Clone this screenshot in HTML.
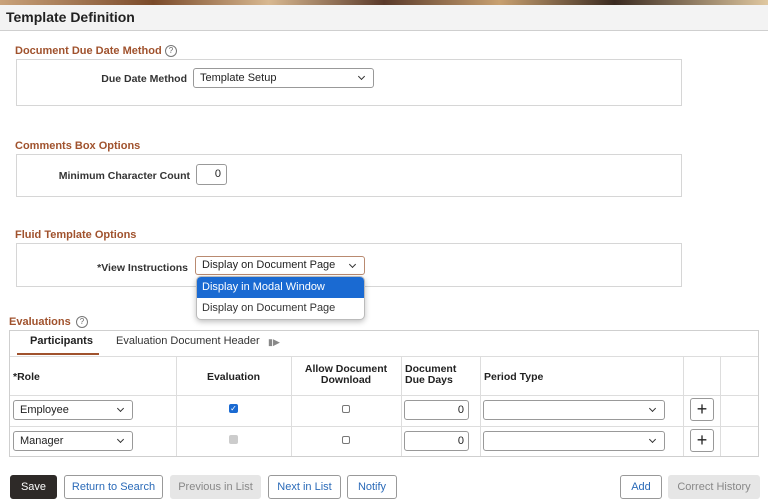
<!DOCTYPE html>
<html><head><style>
*{box-sizing:border-box;margin:0;padding:0}
body{width:768px;height:501px;background:#fff;font-family:"Liberation Sans",Arial,sans-serif;font-size:11px;color:#333;position:relative;overflow:hidden}
.a{position:absolute}
.strip{left:0;top:0;width:768px;height:5px;background:linear-gradient(90deg,#c9a27a,#7a4a2a 20%,#d8b890 35%,#5a3a2a 50%,#c8a070 65%,#3a2a20 80%,#e0c8a0)}
.bar{left:0;top:5px;width:768px;height:26px;background:#f3f3f3;border-bottom:1px solid #cfcfcf}
.title{left:6px;top:9px;font-size:14px;font-weight:bold;color:#222}
.sec{color:#a0522d;font-weight:bold;font-size:11px}
.box{border:1px solid #d6d6d6}
.lbl{font-weight:bold;color:#333;text-align:right;font-size:10.5px}
.inp{border:1px solid #999;border-radius:3px;background:#fff;padding:0 6px;line-height:18px;font-size:11px;color:#222}
.sel{border:1px solid #999;border-radius:3px;background:#fff;padding:0 6px;line-height:18px;font-size:11px;color:#222}
.sel:after{content:"";position:absolute;right:9px;top:5px;width:4px;height:4px;border-right:1.5px solid #333;border-bottom:1.5px solid #333;transform:rotate(45deg)}
.q{width:12px;height:12px;border:1px solid #777;border-radius:50%;font-size:8px;text-align:center;line-height:10px;color:#666}
.btn{border:1px solid #999;border-radius:3px;background:#fff;color:#2a6ab8;text-align:center;line-height:22px;height:24px;font-size:11px}
.dis{background:#e6e6e6;border-color:#e6e6e6;color:#888}
.cb{width:8px;height:8px;border:1px solid #777;border-radius:2px;background:#fff}
.th{font-weight:bold;color:#222;font-size:10.5px}
</style></head><body>
<div class="a strip"></div>
<div class="a bar"></div>
<div class="a title">Template Definition</div>

<div class="a sec" style="left:15px;top:45px">Document Due Date Method</div>
<div class="a q" style="left:165px;top:45px">?</div>
<div class="a box" style="left:16px;top:59px;width:666px;height:47px"></div>
<div class="a lbl" style="left:60px;top:73px;width:127px">Due Date Method</div>
<div class="a sel" style="left:193px;top:68px;width:181px;height:20px">Template Setup</div>

<div class="a sec" style="left:15px;top:140px">Comments Box Options</div>
<div class="a box" style="left:16px;top:154px;width:666px;height:43px"></div>
<div class="a lbl" style="left:30px;top:170px;width:160px">Minimum Character Count</div>
<div class="a inp" style="left:196px;top:164px;width:31px;height:21px;text-align:right;padding-right:5px;line-height:19px">0</div>

<div class="a sec" style="left:15px;top:229px">Fluid Template Options</div>
<div class="a box" style="left:16px;top:243px;width:666px;height:44px"></div>
<div class="a lbl" style="left:60px;top:262px;width:128px">*View Instructions</div>
<div class="a sel" style="left:195px;top:256px;width:170px;height:19px;border-color:#b98a70;line-height:17px">Display on Document Page</div>
<div class="a" style="left:196px;top:276px;width:169px;height:44px;background:#fff;border:1px solid #bbb;border-radius:5px;box-shadow:0 2px 6px rgba(0,0,0,.25);overflow:hidden">
<div style="background:#1a6ad2;color:#fff;height:21px;line-height:20px;padding-left:5px">Display in Modal Window</div>
<div style="height:21px;line-height:21px;padding-left:5px">Display on Document Page</div></div>

<div class="a sec" style="left:9px;top:316px">Evaluations</div>
<div class="a q" style="left:76px;top:316px">?</div>
<div class="a box" style="left:9px;top:330px;width:750px;height:127px;border-color:#cfcfcf"></div>
<div class="a" style="left:30px;top:335px;font-weight:bold;color:#222">Participants</div>
<div class="a" style="left:17px;top:353px;width:82px;height:2px;background:#a0522d"></div>
<div class="a" style="left:116px;top:335px;color:#333">Evaluation Document Header</div>
<div class="a" style="left:268px;top:337px;color:#888;font-size:9px">▮▶</div>
<div class="a" style="left:10px;top:356px;width:748px;border-top:1px solid #ddd"></div>
<div class="a" style="left:10px;top:395px;width:748px;border-top:1px solid #ddd"></div>
<div class="a" style="left:10px;top:426px;width:748px;border-top:1px solid #ddd"></div>
<div class="a" style="left:176px;top:356px;height:100px;border-left:1px solid #ddd"></div>
<div class="a" style="left:291px;top:356px;height:100px;border-left:1px solid #ddd"></div>
<div class="a" style="left:401px;top:356px;height:100px;border-left:1px solid #ddd"></div>
<div class="a" style="left:480px;top:356px;height:100px;border-left:1px solid #ddd"></div>
<div class="a" style="left:683px;top:356px;height:100px;border-left:1px solid #ddd"></div>
<div class="a" style="left:720px;top:356px;height:100px;border-left:1px solid #ddd"></div>
<div class="a th" style="left:13px;top:371px">*Role</div>
<div class="a th" style="left:176px;top:371px;width:115px;text-align:center">Evaluation</div>
<div class="a th" style="left:291px;top:364px;width:110px;text-align:center;line-height:11px">Allow Document<br>Download</div>
<div class="a th" style="left:405px;top:364px;line-height:11px">Document<br>Due Days</div>
<div class="a th" style="left:484px;top:371px">Period Type</div>

<div class="a sel" style="left:13px;top:400px;width:120px;height:20px">Employee</div>
<div class="a" style="left:229px;top:404px;width:9px;height:9px;background:#1a6ad2;border-radius:2px;color:#fff;font-size:8px;line-height:9px;text-align:center">✓</div>
<div class="a cb" style="left:342px;top:405px"></div>
<div class="a inp" style="left:404px;top:400px;width:65px;height:20px;text-align:right;padding-right:4px">0</div>
<div class="a sel" style="left:483px;top:400px;width:182px;height:20px"></div>
<div class="a inp" style="left:690px;top:398px;width:24px;height:23px;font-size:18px;text-align:center;line-height:20px;padding:0">+</div>

<div class="a sel" style="left:13px;top:431px;width:120px;height:20px">Manager</div>
<div class="a" style="left:229px;top:435px;width:9px;height:9px;background:#ccc;border-radius:2px"></div>
<div class="a cb" style="left:342px;top:436px"></div>
<div class="a inp" style="left:404px;top:431px;width:65px;height:20px;text-align:right;padding-right:4px">0</div>
<div class="a sel" style="left:483px;top:431px;width:182px;height:20px"></div>
<div class="a inp" style="left:690px;top:429px;width:24px;height:23px;font-size:18px;text-align:center;line-height:20px;padding:0">+</div>

<div class="a btn" style="left:10px;top:475px;width:47px;background:#2e2a28;border-color:#2e2a28;color:#fff">Save</div>
<div class="a btn" style="left:64px;top:475px;width:99px">Return to Search</div>
<div class="a btn dis" style="left:170px;top:475px;width:91px">Previous in List</div>
<div class="a btn" style="left:268px;top:475px;width:73px">Next in List</div>
<div class="a btn" style="left:347px;top:475px;width:50px">Notify</div>
<div class="a btn" style="left:620px;top:475px;width:42px">Add</div>
<div class="a btn dis" style="left:668px;top:475px;width:92px">Correct History</div>
</body></html>
